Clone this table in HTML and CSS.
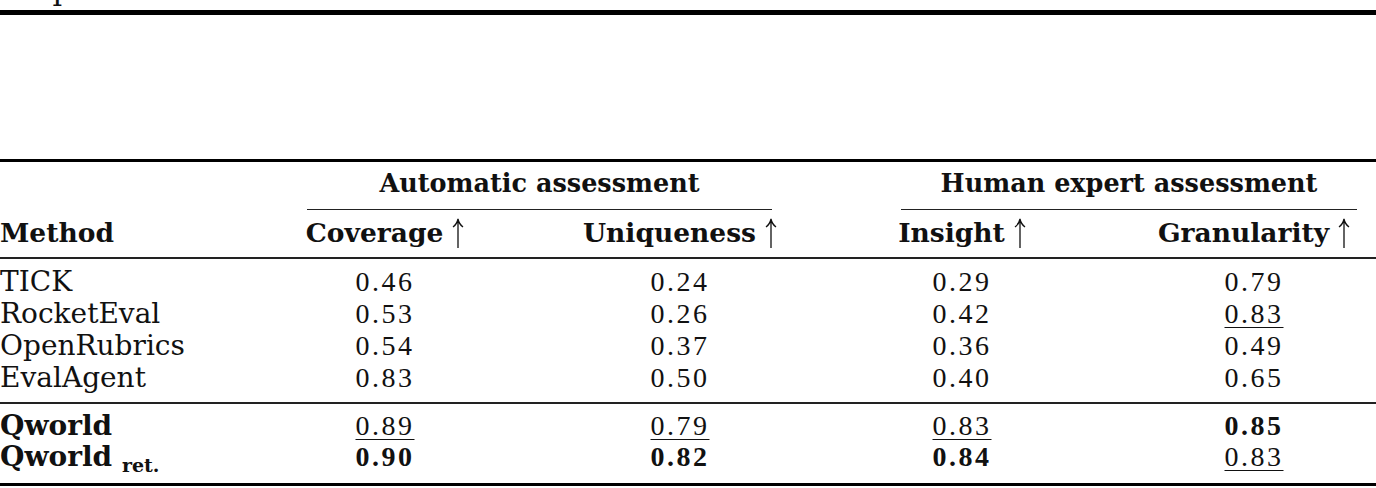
FILE: index.html
```html
<!DOCTYPE html>
<html lang="en">
<head>
    <meta charset="UTF-8">
    <meta name="viewport" content="width=device-width, initial-scale=1.0">
    <title>Rubric generation results</title>
    <link rel="stylesheet" href="styles.css">
</head>
<body>
    <!-- tail of the text above, cut off by the crop -->
    <div class="page-head"><span class="cut-text">T</span></div>
    <div class="page-rule"></div>

    <div class="results">
        <div class="rule-top"></div>

        <!-- group headers -->
        <div class="row group-row">
            <div class="group auto">Automatic assessment</div>
            <div class="group human">Human expert assessment</div>
        </div>

        <!-- column headers, arrow = higher is better -->
        <div class="row head-row">
            <div class="cell name">Method</div>
            <div class="cell">Coverage<svg class="arrow" viewBox="0 0 12 30"><path d="M6 2V30M1 9Q5 6 6 1Q7 6 11 9"/></svg></div>
            <div class="cell">Uniqueness<svg class="arrow" viewBox="0 0 12 30"><path d="M6 2V30M1 9Q5 6 6 1Q7 6 11 9"/></svg></div>
            <div class="cell">Insight<svg class="arrow" viewBox="0 0 12 30"><path d="M6 2V30M1 9Q5 6 6 1Q7 6 11 9"/></svg></div>
            <div class="cell">Granularity<svg class="arrow" viewBox="0 0 12 30"><path d="M6 2V30M1 9Q5 6 6 1Q7 6 11 9"/></svg></div>
        </div>

        <div class="rule-mid"></div>

        <div class="body-block">
            <div class="row">
                <div class="cell name">TICK</div>
                <div class="cell num">0.46</div>
                <div class="cell num">0.24</div>
                <div class="cell num">0.29</div>
                <div class="cell num">0.79</div>
            </div>
            <div class="row">
                <div class="cell name">RocketEval</div>
                <div class="cell num">0.53</div>
                <div class="cell num">0.26</div>
                <div class="cell num">0.42</div>
                <div class="cell num"><u>0.83</u></div>
            </div>
            <div class="row">
                <div class="cell name">OpenRubrics</div>
                <div class="cell num">0.54</div>
                <div class="cell num">0.37</div>
                <div class="cell num">0.36</div>
                <div class="cell num">0.49</div>
            </div>
            <div class="row">
                <div class="cell name">EvalAgent</div>
                <div class="cell num">0.83</div>
                <div class="cell num">0.50</div>
                <div class="cell num">0.40</div>
                <div class="cell num">0.65</div>
            </div>
        </div>

        <div class="rule-mid thin"></div>

        <div class="body-block ours">
            <div class="row">
                <div class="cell name best">Qworld</div>
                <div class="cell num"><u>0.89</u></div>
                <div class="cell num"><u>0.79</u></div>
                <div class="cell num"><u>0.83</u></div>
                <div class="cell num best">0.85</div>
            </div>
            <div class="row">
                <div class="cell name best">Qworld <span class="sub">ret.</span></div>
                <div class="cell num best">0.90</div>
                <div class="cell num best">0.82</div>
                <div class="cell num best">0.84</div>
                <div class="cell num"><u>0.83</u></div>
            </div>
        </div>

        <div class="rule-bottom"></div>
    </div>
</body>
</html>
```

FILE: styles.css
```css
body {
    margin: 0;
    background-color: #fff;
    color: #111;
    font-family: "DejaVu Serif", serif;
    font-size: 28px;
}

.page-head {
    height: 10px;
    overflow: hidden;
}

.cut-text {
    display: block;
    margin-top: -17px;
    margin-left: 48px;
    line-height: 28px;
}

.page-rule {
    height: 5px;
    background-color: #000;
}

.results {
    margin-top: 144px;
}

.rule-top,
.rule-bottom {
    height: 3px;
    background-color: #000;
}

.rule-mid {
    height: 2px;
    background-color: #222;
    margin-top: 8px;
}

.rule-mid.thin {
    margin-top: 8px;
    height: 1.5px;
}

.row {
    display: grid;
    grid-template-columns: 202px 366px 224px 340px 244px;
    line-height: 32px;
}

.cell {
    text-align: center;
    white-space: nowrap;
}

.cell.name {
    text-align: left;
}

/* group headers with their cmidrules */
.group-row {
    padding-top: 5px;
}

.group {
    font-size: 25.5px;
    font-weight: bold;
    text-align: center;
    padding-bottom: 10px;
    border-bottom: 1px solid #222;
    white-space: nowrap;
}

.group.auto {
    grid-column: 2 / 4;
    margin: 0 20px 0 105px;
}

.group.human {
    grid-column: 4 / 6;
    margin: 0 19px 0 109px;
}

.head-row {
    margin-top: 7px;
    font-size: 26.5px;
    font-weight: bold;
}

.arrow {
    width: 12px;
    height: 30px;
    margin-left: 9px;
    vertical-align: -6px;
    fill: none;
    stroke: #111;
    stroke-width: 1.3;
}

.body-block {
    padding-top: 7px;
}

.body-block.ours {
    padding-top: 6px;
    padding-bottom: 11px;
}

.body-block.ours .row {
    line-height: 31px;
}

.num {
    font-family: "Liberation Serif", serif;
    font-size: 28px;
    letter-spacing: 2.5px;
}

.num u {
    text-decoration-thickness: 1px;
    text-underline-offset: 4px;
}

.best {
    font-weight: bold;
}

.sub {
    font-size: 19px;
    line-height: 0;
    vertical-align: -6px;
}
```
